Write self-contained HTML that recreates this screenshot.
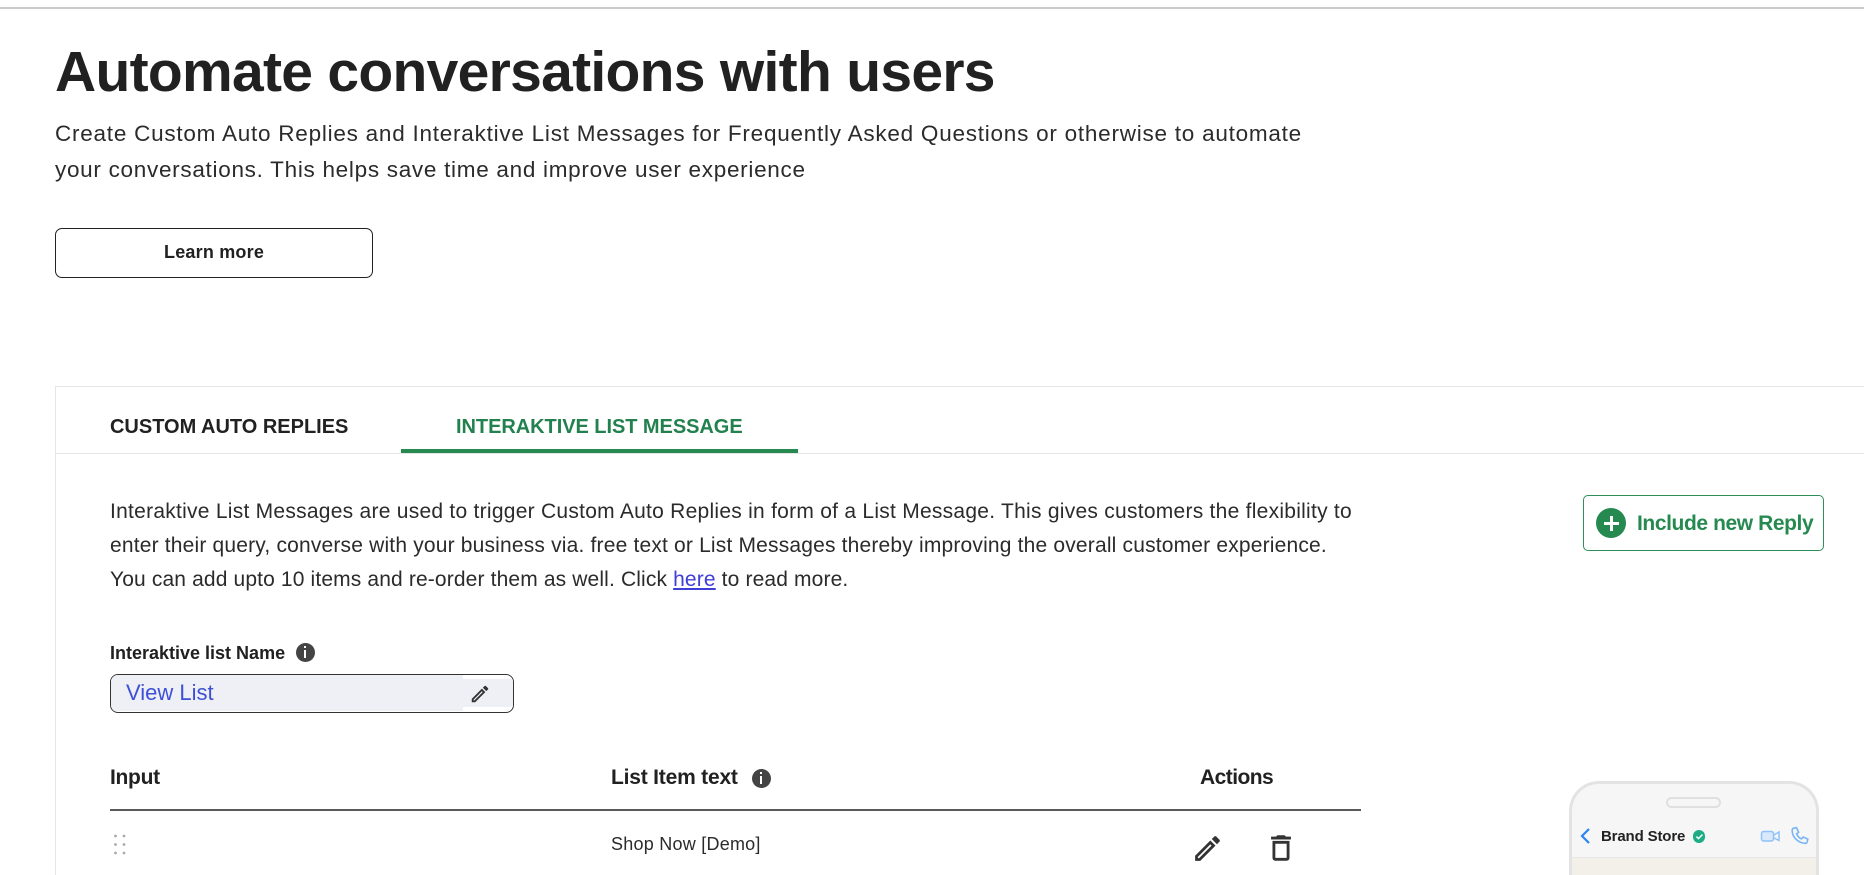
<!DOCTYPE html>
<html lang="en">
<head>
<meta charset="utf-8">
<title>Automate conversations with users</title>
<style>
html,body{margin:0;padding:0;background:#fff;width:1864px;height:875px;overflow:hidden;}
#p{width:1864px;height:875px;position:relative;overflow:hidden;font-family:"Liberation Sans",Arial,sans-serif;color:#212121;}
.t{position:absolute;line-height:0;white-space:nowrap;}
.b{font-weight:700;}
.abs{position:absolute;box-sizing:border-box;}
svg{position:absolute;display:block;}
a{color:#3f3fd8;text-decoration:underline;}
</style>
</head>
<body>
<div id="p">
<div class="abs" style="left:0;top:7px;width:1864px;height:2px;background:#cbcbcb"></div>

<h1 class="t b" style="margin:0;left:55px;top:72px;font-size:57px;letter-spacing:-.7px;color:#212121">Automate conversations with users</h1>
<div class="t" style="left:55px;top:134.4px;font-size:22.5px;letter-spacing:.76px;color:#2b2b2b">Create Custom Auto Replies and Interaktive List Messages for Frequently Asked Questions or otherwise to automate</div>
<div class="t" style="left:55px;top:170.4px;font-size:22.5px;letter-spacing:.71px;color:#2b2b2b">your conversations. This helps save time and improve user experience</div>

<div class="abs" style="left:55px;top:228px;width:318px;height:50px;border:1px solid #222;border-radius:7px"></div>
<div class="t b" style="left:164px;top:251.8px;font-size:18px;letter-spacing:.2px">Learn more</div>

<div class="abs" style="left:55px;top:386px;width:1809px;height:489px;border:1px solid #e6e6e6;border-right:0;border-bottom:0"></div>
<div class="abs" style="left:56px;top:453px;width:1808px;height:1px;background:#e6e6e6"></div>
<div class="t b" style="left:110px;top:427px;font-size:20px;letter-spacing:-.01px">CUSTOM AUTO REPLIES</div>
<div class="t b" style="left:456px;top:427px;font-size:20px;letter-spacing:-.05px;color:#22814f">INTERAKTIVE LIST MESSAGE</div>
<div class="abs" style="left:401px;top:449px;width:397px;height:4px;background:#268a50"></div>

<div class="t" style="left:110px;top:512px;font-size:21px;letter-spacing:.26px;color:#2b2b2b">Interaktive List Messages are used to trigger Custom Auto Replies in form of a List Message. This gives customers the flexibility to</div>
<div class="t" style="left:110px;top:546px;font-size:21px;letter-spacing:.18px;color:#2b2b2b">enter their query, converse with your business via. free text or List Messages thereby improving the overall customer experience.</div>
<div class="t" style="left:110px;top:580px;font-size:21px;letter-spacing:.14px;color:#2b2b2b">You can add upto 10 items and re-order them as well. Click <a>here</a> to read more.</div>

<div class="abs" style="left:1583px;top:495px;width:241px;height:56px;border:1.5px solid #2f8d58;border-radius:5px"></div>
<div class="abs" style="left:1596px;top:508px;width:30px;height:30px;border-radius:50%;background:#268a50"></div>
<div class="abs" style="left:1604px;top:521.5px;width:15px;height:3px;background:#fff"></div>
<div class="abs" style="left:1610px;top:515.5px;width:3px;height:15px;background:#fff"></div>
<div class="t b" style="left:1637px;top:524.4px;font-size:21px;letter-spacing:-.41px;color:#268a50">Include new Reply</div>

<div class="t b" style="left:110px;top:653px;font-size:18px">Interaktive list Name</div>
<div class="abs" style="left:295.5px;top:642.5px;width:19px;height:19px;border-radius:50%;background:#444"></div>
<div class="abs" style="left:304px;top:650px;width:2.4px;height:8px;background:#fff"></div>
<div class="abs" style="left:304px;top:646px;width:2.4px;height:2.4px;background:#fff"></div>

<div class="abs" style="left:110px;top:674px;width:404px;height:39px;border:1.5px solid #333;border-radius:8px;overflow:hidden;background:#fff">
  <div class="abs" style="left:0;top:0;width:352px;height:36px;background:#eff0f5"></div>
  <div class="abs" style="left:352px;top:4px;width:50px;height:28px;background:#eff0f5"></div>
</div>
<div class="t" style="left:126px;top:693.4px;font-size:22px;color:#3d50d6">View List</div>
<svg style="left:469px;top:683px" width="22" height="22" viewBox="0 0 24 24"><path fill="#333" d="M3 17.25V21h3.75L17.81 9.94l-3.75-3.75L3 17.25zM5.92 19H5v-.92l9.06-9.06.92.92L5.92 19zM20.71 5.63l-2.34-2.34c-.2-.2-.45-.29-.71-.29s-.51.1-.7.29l-1.83 1.83 3.75 3.75 1.83-1.83c.39-.39.39-1.02 0-1.41z"/></svg>

<div class="t b" style="left:110px;top:778.2px;font-size:21px;letter-spacing:-.3px">Input</div>
<div class="t b" style="left:611px;top:778.2px;font-size:21px;letter-spacing:-.2px">List Item text</div>
<div class="abs" style="left:751.5px;top:768.5px;width:19px;height:19px;border-radius:50%;background:#444"></div>
<div class="abs" style="left:760px;top:776px;width:2.4px;height:8px;background:#fff"></div>
<div class="abs" style="left:760px;top:772px;width:2.4px;height:2.4px;background:#fff"></div>
<div class="t b" style="left:1200px;top:778.2px;font-size:21px;letter-spacing:-.55px">Actions</div>
<div class="abs" style="left:110px;top:809px;width:1251px;height:1.5px;background:#5a5a5a"></div>

<svg style="left:112px;top:833px" width="16" height="24" viewBox="0 0 16 24" fill="#aaa">
<circle cx="3.5" cy="3" r="1.4"/><circle cx="12" cy="3" r="1.4"/>
<circle cx="3.5" cy="11.5" r="1.4"/><circle cx="12" cy="11.5" r="1.4"/>
<circle cx="3.5" cy="20" r="1.4"/><circle cx="12" cy="20" r="1.4"/></svg>
<div class="t" style="left:611px;top:843.8px;font-size:18px;letter-spacing:.24px;color:#2b2b2b">Shop Now [Demo]</div>
<svg style="left:1191px;top:832px" width="33" height="33" viewBox="0 0 24 24"><path fill="#333" d="M3 17.25V21h3.75L17.81 9.94l-3.75-3.75L3 17.25zM5.92 19H5v-.92l9.06-9.06.92.92L5.92 19zM20.71 5.63l-2.34-2.34c-.2-.2-.45-.29-.71-.29s-.51.1-.7.29l-1.83 1.83 3.75 3.75 1.83-1.83c.39-.39.39-1.02 0-1.41z"/></svg>
<svg style="left:1264px;top:831px" width="34" height="34" viewBox="0 0 24 24"><path fill="#333" d="M16 9v10H8V9h8m-1.5-6h-5l-1 1H5v2h14V4h-3.5l-1-1zM18 7H6v12c0 1.1.9 2 2 2h8c1.1 0 2-.9 2-2V7z"/></svg>

<div class="abs" style="left:1569px;top:781px;width:250px;height:94px;border:3px solid #e3e3e3;border-bottom:0;border-radius:30px 30px 0 0;background:#f6f6f6;overflow:hidden">
  <div class="abs" style="left:0;top:73px;width:244px;height:18px;background:#f3f0ea;border-top:1px solid #e6e6e6"></div>
</div>
<div class="abs" style="left:1666px;top:797px;width:55px;height:11px;border:2px solid #e0e0e0;border-radius:6px"></div>
<svg style="left:1578px;top:826px" width="16" height="20" viewBox="0 0 16 20"><path d="M11 3 4 10l7 7" fill="none" stroke="#2d86f0" stroke-width="2.2"/></svg>
<div class="t b" style="left:1601px;top:836.8px;font-size:15px;letter-spacing:-.15px;color:#222">Brand Store</div>
<div class="abs" style="left:1692.5px;top:830px;width:12.5px;height:12.5px;border-radius:50%;background:#1cad87"></div>
<svg style="left:1692.5px;top:830px" width="13" height="13" viewBox="0 0 13 13"><path d="M3.4 6.6 5.5 8.6 9.4 4.6" fill="none" stroke="#fff" stroke-width="1.5"/></svg>
<svg style="left:1760px;top:829px" width="22" height="14" viewBox="0 0 22 14" fill="none" stroke="#90c2f7" stroke-width="1.5"><rect x="1.5" y="2.5" width="12" height="9.5" rx="2.2" fill="#d9e9fb"/><path d="M14 6 19 3V11.5L14 9"/></svg>
<svg style="left:1789px;top:826px" width="20" height="20" viewBox="0 0 24 24"><path fill="none" stroke="#7cb6f5" stroke-width="2" d="M6 2.5 9 2l2.5 5.5-2.3 2c1 2.5 3 4.8 5.8 6l2-2.3 5.5 2.5-.6 3.2c-.3 1.3-1.5 2.1-2.8 1.9C10.5 20 4 13.5 3.8 5.5 3.8 4 4.7 2.8 6 2.5z"/></svg>
</div>
</body>
</html>
